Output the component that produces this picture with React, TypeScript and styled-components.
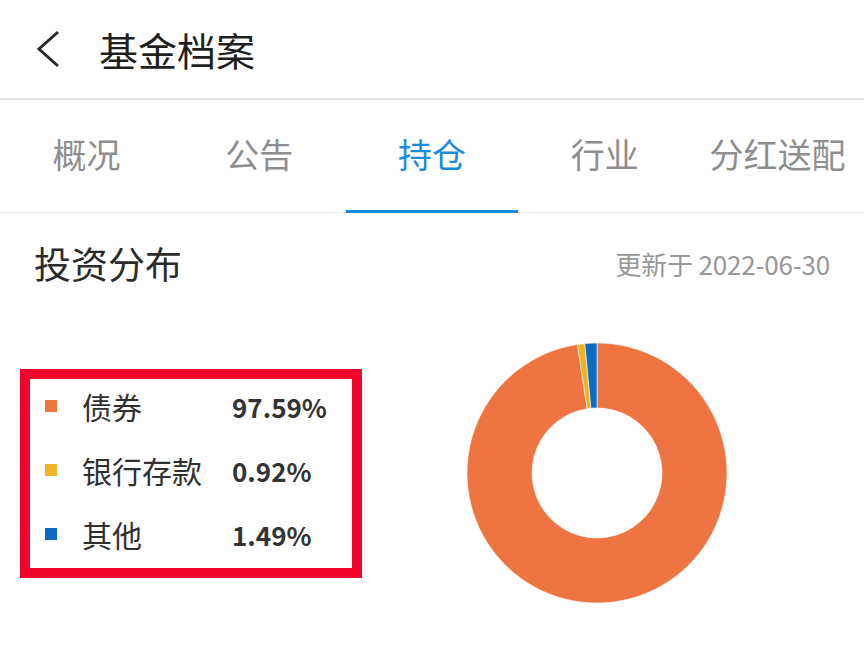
import React from "react"
import styled, { createGlobalStyle } from "styled-components"

const GlobalStyle = createGlobalStyle`
    html, body {
        margin: 0;
        padding: 0;
        background: #ffffff;
        font-family: "Noto Sans CJK SC", "Noto Sans", sans-serif;
    }
`

interface ISlice {
    name: string
    value: number
    color: string
}

const holdings: ISlice[] = [
    { name: "债券", value: 97.59, color: "#ee7441" },
    { name: "银行存款", value: 0.92, color: "#f1b325" },
    { name: "其他", value: 1.49, color: "#0c6cc5" },
]

const tabs = ["概况", "公告", "持仓", "行业", "分红送配"]

const SPage = styled.div`
    width: 864px;
    min-height: 646px;
    background: #ffffff;
`

const SHeader = styled.header`
    display: flex;
    align-items: center;
    height: 98px;
    padding-left: 36px;
    border-bottom: 2px solid #e4e4e4;
`

const SBack = styled.button`
    display: flex;
    align-items: center;
    padding: 0;
    border: none;
    background: none;
    cursor: pointer;
`

const STitle = styled.h1`
    margin: 0 0 0 39px;
    font-size: 39px;
    font-weight: 400;
    color: #1f1f1f;
    line-height: 1;
`

const STabs = styled.nav`
    display: grid;
    grid-template-columns: repeat(5, 1fr);
    height: 112px;
    border-bottom: 1px solid #e6e6e6;
`

const STab = styled.div<{ $active?: boolean }>`
    position: relative;
    display: flex;
    align-items: center;
    justify-content: center;
    padding-bottom: 5px;
    font-size: 34px;
    color: ${({ $active }) => ($active ? "#1b8bdc" : "#8e8e8e")};

    ${({ $active }) => $active && `
        &::after {
            content: "";
            position: absolute;
            left: 0;
            right: 0;
            bottom: -1px;
            height: 3px;
            background: #1b8bdc;
        }
    `}
`

const SSectionHead = styled.div`
    display: flex;
    align-items: center;
    justify-content: space-between;
    height: 100px;
    padding: 0 34px 0 34px;
`

const SSectionTitle = styled.h2`
    margin: 0;
    font-size: 37px;
    font-weight: 400;
    color: #2b2b2b;
    line-height: 1;
`

const SUpdated = styled.span`
    font-size: 26px;
    color: #989898;
    letter-spacing: -0.2px;
`

const SContent = styled.div`
    display: flex;
    align-items: center;
    padding: 30px 0 0 20px;
`

const SLegend = styled.div`
    display: flex;
    flex-direction: column;
    justify-content: center;
    box-sizing: border-box;
    width: 342px;
    height: 209px;
    padding: 0 0 6px 15px;
    border: 10px solid #f0052b;
`

const SLegendRow = styled.div`
    display: flex;
    align-items: center;
    flex-shrink: 0;
    height: 64px;
`

const SSwatch = styled.span<{ $color: string }>`
    width: 12px;
    height: 12px;
    margin-right: 25px;
    background: ${({ $color }) => $color};
`

const SLabel = styled.span`
    width: 150px;
    font-size: 30px;
    color: #303030;
`

const SValue = styled.span`
    font-size: 26px;
    font-weight: 700;
    color: #333333;
`

const SChart = styled.div`
    margin-left: 105px;
    width: 260px;
    height: 260px;
`

// angle in degrees, measured clockwise from 12 o'clock
const point = (cx: number, cy: number, r: number, deg: number) => {
    const rad = (deg - 90) * Math.PI / 180
    return [cx + r * Math.cos(rad), cy + r * Math.sin(rad)]
}

const ringSegment = (cx: number, cy: number, R: number, r: number, a0: number, a1: number) => {
    const large = a1 - a0 > 180 ? 1 : 0
    const [x0, y0] = point(cx, cy, R, a0)
    const [x1, y1] = point(cx, cy, R, a1)
    const [x2, y2] = point(cx, cy, r, a1)
    const [x3, y3] = point(cx, cy, r, a0)
    return `M${x0} ${y0} A${R} ${R} 0 ${large} 1 ${x1} ${y1} L${x2} ${y2} A${r} ${r} 0 ${large} 0 ${x3} ${y3} Z`
}

const Donut = ({ data }: { data: ISlice[] }) => {
    const total = data.reduce((s, d) => s + d.value, 0)
    let start = 0
    return (
        <svg width="260" height="260" viewBox="0 0 260 260">
            {data.map((d) => {
                const end = start + (d.value / total) * 360
                const path = ringSegment(130, 130, 130, 65, start, end)
                start = end
                return <path key={d.name} d={path} fill={d.color} stroke="#ffffff" strokeWidth="0.6" />
            })}
        </svg>
    )
}

export default function App() {
    return (
        <SPage>
            <GlobalStyle />
            <SHeader>
                <SBack aria-label="返回">
                    <svg width="24" height="40" viewBox="0 0 24 40">
                        <polyline points="22,3 3,20 22,37" fill="none" stroke="#2a2a2a" strokeWidth="3" strokeLinejoin="miter" />
                    </svg>
                </SBack>
                <STitle>基金档案</STitle>
            </SHeader>

            <STabs>
                {tabs.map((t) => (
                    <STab key={t} $active={t === "持仓"}>{t}</STab>
                ))}
            </STabs>

            <SSectionHead>
                <SSectionTitle>投资分布</SSectionTitle>
                <SUpdated>更新于 2022-06-30</SUpdated>
            </SSectionHead>

            <SContent>
                <SLegend>
                    {holdings.map((h) => (
                        <SLegendRow key={h.name}>
                            <SSwatch $color={h.color} />
                            <SLabel>{h.name}</SLabel>
                            <SValue>{h.value.toFixed(2)}%</SValue>
                        </SLegendRow>
                    ))}
                </SLegend>
                <SChart>
                    <Donut data={holdings} />
                </SChart>
            </SContent>
        </SPage>
    )
}
